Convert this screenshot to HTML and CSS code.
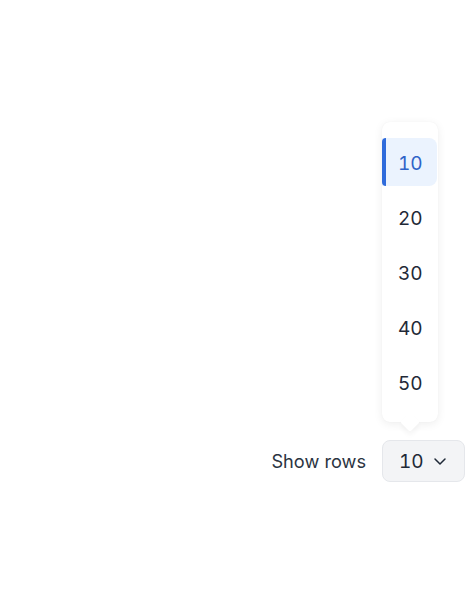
FILE: index.html
```html
<!DOCTYPE html>
<html lang="en">
<head>
    <meta charset="UTF-8">
    <meta name="viewport" content="width=device-width, initial-scale=1.0">
    <title>Show rows</title>
    <link rel="stylesheet" href="styles.css">
</head>
<body>
    <div class="pager">
        <span class="pager-label">Show rows</span>
        <div class="select-wrap">
            <ul class="menu">
                <li class="menu-item active">10</li>
                <li class="menu-item">20</li>
                <li class="menu-item">30</li>
                <li class="menu-item">40</li>
                <li class="menu-item">50</li>
            </ul>
            <button class="trigger">
                <span>10</span>
                <svg class="chevron" width="14" height="14" viewBox="0 0 14 14" fill="none">
                    <path d="M2 5l5 5 5-5" stroke="#1f2937" stroke-width="1.5" stroke-linecap="round" stroke-linejoin="round"/>
                </svg>
            </button>
        </div>
    </div>
</body>
</html>
```

FILE: styles.css
```css
body {
    margin: 0;
    background: #fff;
    font-family: Inter, 'Noto Sans', sans-serif;
    color: #1f2937;
}
.pager {
    display: flex;
    justify-content: flex-end;
    align-items: center;
    gap: 16px;
    padding: 440px 9px 0 0;
}
.pager-label {
    font-size: 18.2px;
    color: #2b3441;
}
.select-wrap {
    position: relative;
}
.trigger {
    display: flex;
    align-items: center;
    gap: 9px;
    height: 42px;
    width: 83px;
    padding: 0 0 0 16px;
    background: #f3f4f6;
    border: 1px solid #e5e7eb;
    border-radius: 8px;
    font-family: inherit;
    font-size: 19px;
    font-feature-settings: "tnum";
    color: #1f2937;
}
.menu {
    position: absolute;
    left: 0;
    bottom: calc(100% + 18px);
    width: 56px;
    margin: 0;
    padding: 16px 0;
    list-style: none;
    background: #fff;
    border-radius: 8px;
    box-shadow: 0 2px 10px rgba(0, 0, 0, 0.07), 0 0 1px rgba(0, 0, 0, 0.06);
}
.menu::after {
    content: "";
    position: absolute;
    left: 50%;
    bottom: -7px;
    width: 14px;
    height: 14px;
    margin-left: -7px;
    background: #fff;
    transform: rotate(45deg);
    border-radius: 2px;
    box-shadow: 3px 3px 5px rgba(0, 0, 0, 0.04);
}
.menu-item {
    height: 48px;
    line-height: 51px;
    padding-left: 16px;
    font-size: 19px;
    font-feature-settings: "tnum";
    color: #1f2937;
    margin-bottom: 7px;
}
.menu-item:last-child {
    margin-bottom: 0;
}
.menu-item.active {
    position: relative;
    background: #ebf3fe;
    color: #2f63c8;
    border-radius: 0 8px 8px 0;
    margin-right: 1px;
}
.menu-item.active::before {
    content: "";
    position: absolute;
    left: 0;
    top: 0;
    bottom: 0;
    width: 4px;
    background: #2f6bdb;
    border-radius: 4px 0 0 4px;
}
```
